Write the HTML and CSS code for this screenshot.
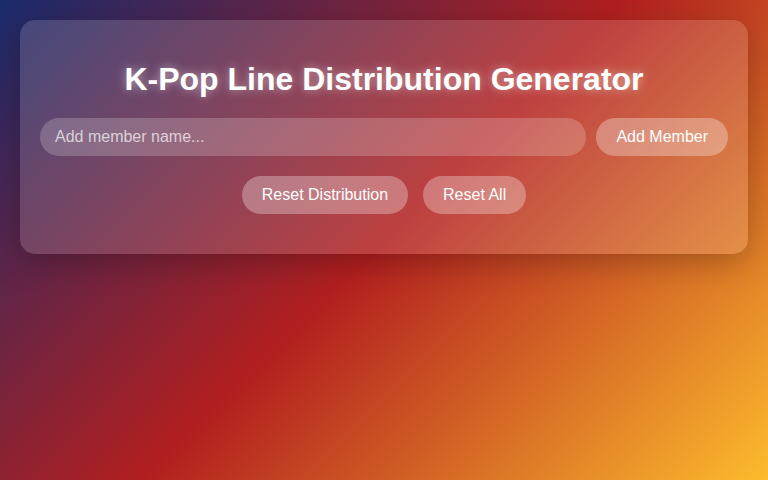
FILE: index.html
```html
<!DOCTYPE html>
<html lang="en">
<head>
<meta charset="utf-8">
<title>K-Pop Line Distribution Generator</title>
<link rel="stylesheet" href="styles.css">
</head>
<body>
  <div class="card">
    <h1 class="title">K-Pop Line Distribution Generator</h1>
    <div class="add-row">
      <input class="name-input" type="text" placeholder="Add member name...">
      <button class="btn">Add Member</button>
    </div>
    <div class="controls">
      <button class="btn">Reset Distribution</button>
      <button class="btn">Reset All</button>
    </div>
  </div>
</body>
</html>
```
FILE: styles.css
```css
html, body {
  margin: 0;
  height: 100%;
}
body {
  padding: 20px;
  box-sizing: border-box;
  min-height: 100vh;
  background: linear-gradient(135deg, #1a2a6c, #b21f1f, #fdbb2d);
  font-family: "Liberation Sans", Arial, sans-serif;
  color: #fff;
}
.card {
  background: rgba(255, 255, 255, 0.15);
  border-radius: 15px;
  padding: 20px;
  box-shadow: 0 8px 32px rgba(0, 0, 0, 0.25);
}
.title {
  margin: 21px 0 20px;
  font-size: 32px;
  line-height: 37px;
  text-align: center;
  font-weight: bold;
  text-shadow: 0 0 10px rgba(255, 255, 255, 0.5);
}
.add-row {
  display: flex;
  gap: 10px;
}
.name-input {
  flex: 1;
  min-width: 0;
  border: none;
  outline: none;
  border-radius: 25px;
  padding: 10px 15px;
  font-family: inherit;
  font-size: 16px;
  line-height: 18px;
  color: #fff;
  background: rgba(255, 255, 255, 0.2);
}
.name-input::placeholder {
  color: rgba(255, 255, 255, 0.7);
}
.btn {
  border: none;
  border-radius: 25px;
  padding: 10px 20px;
  font-family: inherit;
  font-size: 16px;
  line-height: 18px;
  color: #fff;
  background: rgba(255, 255, 255, 0.3);
  cursor: pointer;
}
.controls {
  display: flex;
  justify-content: center;
  gap: 15px;
  margin: 20px 0;
}
```
